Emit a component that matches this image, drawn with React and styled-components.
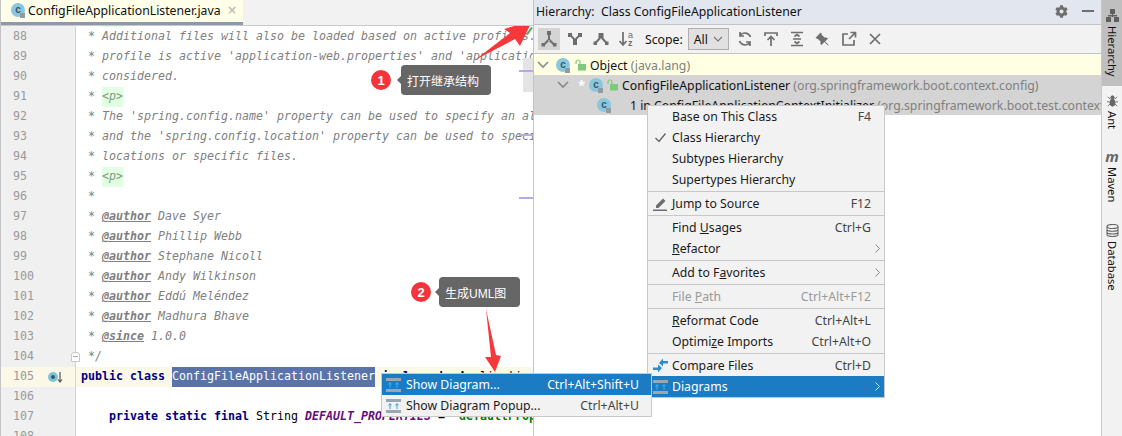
import React from "react";
import styled, { createGlobalStyle } from "styled-components";
import { FaCog } from "react-icons/fa";
import { BsPinAngleFill } from "react-icons/bs";

const UI_FONT = `"Noto Sans", "Noto Sans CJK SC", sans-serif`;
const MONO_FONT = `"DejaVu Sans Mono", "Liberation Mono", monospace`;

const GlobalStyle = createGlobalStyle`
  html, body {
    margin: 0;
    padding: 0;
    background: #fff;
  }
  svg {
    flex-shrink: 0;
  }
`;

function ClassIcon({ locked = true }) {
  return (
    <svg width="17" height="17" viewBox="0 0 17 17">
      <circle cx="8" cy="8" r="7" fill="#8ac6de" />
      <text x="8" y="11" fontSize="10" fontWeight="700" textAnchor="middle" fill="#35596b" fontFamily="Liberation Sans">
        c
      </text>
      {locked && <rect x="10" y="11" width="5" height="5" fill="#8f9aa3" />}
    </svg>
  );
}

function UnlockIcon() {
  return (
    <svg width="11" height="12" viewBox="0 0 11 12">
      <rect x="3" y="5" width="8" height="6.5" fill="#7fc97f" />
      <path d="M1 5V3a2 2 0 0 1 4 0v2" fill="none" stroke="#7fc97f" strokeWidth="1.2" />
    </svg>
  );
}

function Chevron() {
  return (
    <svg width="12" height="8" viewBox="0 0 12 8">
      <path d="M1 1l5 5 5-5" fill="none" stroke="#8c8c8c" strokeWidth="1.7" />
    </svg>
  );
}

function DiagramIcon({ onBlue }) {
  const arrow = onBlue ? "#3fb3e8" : "#3c9fd8";
  return (
    <svg width="15" height="14" viewBox="0 0 15 14">
      <rect x="0" y="0" width="15" height="3" fill="#9aa7b0" />
      <rect x="0" y="11" width="15" height="3" fill="#9aa7b0" />
      <path d="M4 10V5M2.5 6.5L4 4.5l1.5 2M11 10V5M9.5 6.5L11 4.5l1.5 2" fill="none" stroke={arrow} strokeWidth="1" />
    </svg>
  );
}

function ToolIcon({ d, fill = "none", children }) {
  return (
    <svg width="16" height="16" viewBox="0 0 16 16" fill={fill} stroke={fill === "none" ? "#6e6e6e" : "none"} strokeWidth="1.7">
      {d && <path d={d} />}
      {children}
    </svg>
  );
}

const MENU = [
  [{ label: "Base on This Class", shortcut: "F4" }, { label: "Class Hierarchy", check: true }, { label: "Subtypes Hierarchy" }, { label: "Supertypes Hierarchy" }],
  [{ label: "Jump to Source", shortcut: "F12", pencil: true }],
  [{ label: <>Find <u>U</u>sages</>, shortcut: "Ctrl+G" }, { label: <><u>R</u>efactor</>, more: true }],
  [{ label: <>Add to F<u>a</u>vorites</>, more: true }],
  [{ label: <>File <u>P</u>ath</>, shortcut: "Ctrl+Alt+F12", disabled: true }],
  [{ label: <><u>R</u>eformat Code</>, shortcut: "Ctrl+Alt+L" }, { label: <>Optimi<u>z</u>e Imports</>, shortcut: "Ctrl+Alt+O" }],
  [{ label: "Compare Files", shortcut: "Ctrl+D", compare: true }, { label: "Diagrams", more: true, active: true, diagram: true }],
];

export default function App() {
  const codeLines = [
    [88, <Doc> * Additional files will also be loaded based on active profiles. For example</Doc>],
    [89, <Doc> * profile is active 'application-web.properties' and 'application-web.yml' will</Doc>],
    [90, <Doc> * considered.</Doc>],
    [91, <><Doc> * </Doc><HtmlTag>&lt;p&gt;</HtmlTag></>],
    [92, <Doc> * The 'spring.config.name' property can be used to specify an alternative name</Doc>],
    [93, <Doc> * and the 'spring.config.location' property can be used to specify alternative</Doc>],
    [94, <Doc> * locations or specific files.</Doc>],
    [95, <><Doc> * </Doc><HtmlTag>&lt;p&gt;</HtmlTag></>],
    [96, <Doc> *</Doc>],
    [97, <><Doc> * </Doc><DocTag>@author</DocTag><Doc> Dave Syer</Doc></>],
    [98, <><Doc> * </Doc><DocTag>@author</DocTag><Doc> Phillip Webb</Doc></>],
    [99, <><Doc> * </Doc><DocTag>@author</DocTag><Doc> Stephane Nicoll</Doc></>],
    [100, <><Doc> * </Doc><DocTag>@author</DocTag><Doc> Andy Wilkinson</Doc></>],
    [101, <><Doc> * </Doc><DocTag>@author</DocTag><Doc> Eddú Meléndez</Doc></>],
    [102, <><Doc> * </Doc><DocTag>@author</DocTag><Doc> Madhura Bhave</Doc></>],
    [103, <><Doc> * </Doc><DocTag>@since</DocTag><Doc> 1.0.0</Doc></>],
    [104, <Doc> */</Doc>],
    [105, <><Keyword>public class </Keyword><Selected>ConfigFileApplicationListener</Selected><Keyword> implements </Keyword>ApplicationListener</>],
    [106, ""],
    [107, <>{"    "}<Keyword>private static final </Keyword>String <Constant>DEFAULT_PROPERTIES</Constant> = <Str>"defaultProperties"</Str>;</>],
    [108, ""],
  ];

  return (
    <Page>
      <GlobalStyle />
      <Editor>
        <TabBar>
          <Tab>
            <ClassIcon />
            <TabName>ConfigFileApplicationListener.java</TabName>
            <TabClose>×</TabClose>
          </Tab>
        </TabBar>
        <CodeArea>
          {codeLines.map(([no, code]) => (
            <CodeRow key={no} $current={no === 105}>
              <LineNo $current={no === 105}>
                <LineDigits>{no}</LineDigits>
                {no === 105 && (
                  <svg width="16" height="16" viewBox="0 0 16 16">
                    <circle cx="6" cy="8" r="5" fill="#7cc4da" />
                    <circle cx="6" cy="8" r="2" fill="#35596b" />
                    <path d="M13 3v10M11 10.5l2 2.5 2-2.5" fill="none" stroke="#555" strokeWidth="1.2" />
                  </svg>
                )}
              </LineNo>
              <CodeText>{code}</CodeText>
              {no === 104 && <FoldMark />}
            </CodeRow>
          ))}
        </CodeArea>
        <GreenTick />
        <ChangeBlock />
        <PurpleMark $top={70} />
        <PurpleMark $top={134} />
        <PurpleMark $top={197} />
      </Editor>

      <Hierarchy>
        <Header>
          <HeaderTitle>Hierarchy:&nbsp; Class ConfigFileApplicationListener</HeaderTitle>
          <HeaderTools>
            <FaCog size={13} color="#6e6e6e" />
            <MinusBar />
          </HeaderTools>
        </Header>
        <Toolbar>
          <ToolButton $active>
            <ToolIcon fill="#6e6e6e">
              <rect x="6" y="0" width="4" height="4" />
              <rect x="7" y="4" width="2" height="5" />
              <path d="M7 8L2 13l1.5 1.5L9 9zM9 8l5 5-1.5 1.5L7 9z" />
              <rect x="0.5" y="12" width="3.5" height="3.5" />
              <rect x="12" y="12" width="3.5" height="3.5" />
            </ToolIcon>
          </ToolButton>
          <ToolButton>
            <ToolIcon fill="#6e6e6e">
              <rect x="1" y="2" width="4" height="4" />
              <rect x="11" y="2" width="4" height="4" />
              <path d="M4 3.5L9 8.5 7.5 10 2.8 5zM12 3.5L7 8.5 8.5 10l4.7-5z" />
              <rect x="6" y="8" width="4" height="6" />
            </ToolIcon>
          </ToolButton>
          <ToolButton>
            <ToolIcon fill="#6e6e6e">
              <rect x="5.5" y="2" width="5" height="5" />
              <path d="M6.5 6L1.5 11.5 3 13l5-5.5zM9.5 6l5 5.5L13 13 8 7.5z" />
              <rect x="0.5" y="10.5" width="3.5" height="3.5" />
              <rect x="12" y="10.5" width="3.5" height="3.5" />
            </ToolIcon>
          </ToolButton>
          <ToolButton>
            <svg width="18" height="18" viewBox="0 0 18 18">
              <path d="M5 2v13M1.5 11L5 15l3.5-4" fill="none" stroke="#6e6e6e" strokeWidth="1.7" />
              <text x="10" y="8" fontSize="9" fill="#6e6e6e" fontFamily="Liberation Sans">a</text>
              <text x="10" y="16" fontSize="9" fontWeight="700" fill="#6e6e6e" fontFamily="Liberation Sans">z</text>
            </svg>
          </ToolButton>
          <ScopeLabel>Scope:</ScopeLabel>
          <ScopeBox>
            <span>All</span>
            <svg width="10" height="6" viewBox="0 0 10 6">
              <path d="M1 1l4 4 4-4" fill="none" stroke="#777" strokeWidth="1.1" />
            </svg>
          </ScopeBox>
          <ToolGroup>
            <ToolButton>
              <ToolIcon d="M13.5 6A6 6 0 0 0 3 4.5M2.5 10a6 6 0 0 0 10.5 1.5M3 1v4h4M13 15v-4H9" />
            </ToolButton>
            <ToolButton>
              <ToolIcon d="M2 5V2h12v3M8 15V5.500M4.500 9L8 5.500l3.500 3.500" />
            </ToolButton>
            <ToolButton>
              <ToolIcon d="M2 1.500h12M2 14.500h12M4 8h8M5.500 5.500L8 3.500l2.500 2M5.500 10.500L8 12.500l2.500-2" />
            </ToolButton>
            <ToolButton>
              <BsPinAngleFill size={15} color="#6e6e6e" style={{ transform: "scaleX(-1)" }} />
            </ToolButton>
            <ToolButton>
              <ToolIcon d="M7 3H2v11h11V9M8 8l6-6M9.500 1.500H14.500V6.500" />
            </ToolButton>
            <ToolButton>
              <ToolIcon d="M3 3l10 10M13 3L3 13" />
            </ToolButton>
          </ToolGroup>
        </Toolbar>
        <Tree>
          <TreeRow $tone="#ffffe4" $indent={3}>
            <Chevron />
            <IconSlot $left={6}><ClassIcon /></IconSlot>
            <IconSlot $left={3}><UnlockIcon /></IconSlot>
            <NodeName $left={4}>Object <Package>(java.lang)</Package></NodeName>
          </TreeRow>
          <TreeRow $tone="#d4d4d4" $indent={23}>
            <Chevron />
            <Star>*</Star>
            <IconSlot $left={3}><ClassIcon /></IconSlot>
            <IconSlot $left={2}><UnlockIcon /></IconSlot>
            <NodeName $left={4}>ConfigFileApplicationListener <Package>(org.springframework.boot.context.config)</Package></NodeName>
          </TreeRow>
          <TreeRow $tone="#d4d4d4" $indent={62}>
            <ClassIcon />
            <NodeName $left={17}>1 in ConfigFileApplicationContextInitializer <Package>(org.springframework.boot.test.context.SpringBoot</Package></NodeName>
          </TreeRow>
        </Tree>
      </Hierarchy>

      <Stripe>
        <StripeButton $active $height={86}>
          <svg width="13" height="13" viewBox="0 0 13 13" fill="#5f5f5f">
            <rect x="4" y="0" width="5" height="5" />
            <rect x="6" y="4" width="1" height="4" />
            <rect x="2" y="6" width="9" height="1.5" />
            <rect x="0" y="8" width="5" height="5" />
            <rect x="8" y="8" width="5" height="5" />
          </svg>
          <StripeLabel>Hierarchy</StripeLabel>
        </StripeButton>
        <StripeButton $height={54}>
          <svg width="13" height="12" viewBox="0 0 13 14" fill="none" stroke="#666" strokeWidth="1">
            <ellipse cx="6.5" cy="3" rx="2" ry="2" fill="#666" />
            <ellipse cx="6.5" cy="9" rx="3" ry="4" fill="#666" />
            <path d="M1 2l3 3M12 2L9 5M0 8h3M13 8h-3M1 13l3-3M12 13L9 10" />
          </svg>
          <StripeLabel>Ant</StripeLabel>
        </StripeButton>
        <StripeButton $height={75}>
          <MavenMark>m</MavenMark>
          <StripeLabel>Maven</StripeLabel>
        </StripeButton>
        <StripeButton $height={72}>
          <svg width="13" height="13" viewBox="0 0 13 13" fill="none" stroke="#666" strokeWidth="1.1">
            <ellipse cx="6.5" cy="2.5" rx="5.5" ry="2" />
            <path d="M1 2.5v8c0 1 2.5 2 5.5 2s5.5-1 5.5-2v-8M1 5.2c0 1 2.5 2 5.5 2s5.5-1 5.5-2M1 8c0 1 2.5 2 5.5 2s5.5-1 5.5-2" />
          </svg>
          <StripeLabel>Database</StripeLabel>
        </StripeButton>
      </Stripe>

      <ContextMenu>
        {MENU.map((group, i) => (
          <React.Fragment key={i}>
            {i > 0 && <MenuSeparator />}
            {group.map((item, j) => (
              <MenuRow key={j} $active={item.active} $disabled={item.disabled}>
                <MenuIcon>
                  {item.check && (
                    <svg width="13" height="11" viewBox="0 0 13 11">
                      <path d="M1.5 6L5 9.5 11.5 1.5" fill="none" stroke="#666" strokeWidth="1.4" />
                    </svg>
                  )}
                  {item.pencil && (
                    <svg width="15" height="14" viewBox="0 0 15 14">
                      <path d="M3 8.5L10 1.5l2.5 2.5-7 7H3zM0 12.5h14V14H0z" fill="#6e6e6e" />
                    </svg>
                  )}
                  {item.compare && (
                    <svg width="15" height="15" viewBox="0 0 15 15">
                      <path d="M6 5l4-4.500V3h5v2.500h-5V8.500zM9 10L5 14.500V12H0V9.500h5V6.500z" fill="#2f8ccc" />
                    </svg>
                  )}
                  {item.diagram && <DiagramIcon onBlue />}
                </MenuIcon>
                <MenuLabel>{item.label}</MenuLabel>
                {item.shortcut && <MenuShortcut $active={item.active} $disabled={item.disabled}>{item.shortcut}</MenuShortcut>}
                <MenuArrow>
                  {item.more && (
                    <svg width="5" height="9" viewBox="0 0 5 9">
                      <path d="M0.5 0.5l4 4-4 4" fill="none" stroke={item.active ? "#cfe4f5" : "#888"} strokeWidth="1" />
                    </svg>
                  )}
                </MenuArrow>
              </MenuRow>
            ))}
          </React.Fragment>
        ))}
      </ContextMenu>

      <Submenu>
        <SubmenuRow $active>
          <DiagramIcon onBlue />
          <MenuLabel>Show Diagram...</MenuLabel>
          <MenuShortcut $active>Ctrl+Alt+Shift+U</MenuShortcut>
        </SubmenuRow>
        <SubmenuRow>
          <DiagramIcon />
          <MenuLabel>Show Diagram Popup...</MenuLabel>
          <MenuShortcut>Ctrl+Alt+U</MenuShortcut>
        </SubmenuRow>
      </Submenu>

      <Callout $x={371} $y={65} $gap={10}>
        <Badge>1</Badge>
        <CalloutLabel $width={90}>打开继承结构</CalloutLabel>
      </Callout>
      <Callout $x={411} $y={277} $gap={8}>
        <Badge>2</Badge>
        <CalloutLabel $width={81}>生成UML图</CalloutLabel>
      </Callout>

      <ArrowOverlay width="1122" height="436" viewBox="0 0 1122 436">
        <polygon points="475,60 510,33 504,29 532,21 520,46 515,39" fill="#f5393b" />
        <polygon points="486,309 491,357 485,357 495,372 501,356 496,355" fill="#f5393b" />
      </ArrowOverlay>
    </Page>
  );
}

const Page = styled.div`
  position: relative;
  display: flex;
  width: 1122px;
  height: 436px;
  overflow: hidden;
  background: #fff;
  font-family: ${UI_FONT};
  font-size: 12.25px;
  color: #1a1a1a;
`;

const Editor = styled.div`
  position: relative;
  flex: 0 0 533px;
  display: flex;
  flex-direction: column;
  box-sizing: border-box;
  border-left: 1px solid #c4c4c4;
  overflow: hidden;
`;

const TabBar = styled.div`
  position: relative;
  z-index: 1;
  flex: 0 0 25px;
  box-sizing: border-box;
  background: #f2f2f2;
  border-bottom: 1px solid #c9c9c9;
`;

const Tab = styled.div`
  display: flex;
  align-items: center;
  box-sizing: border-box;
  width: 242px;
  height: 25px;
  padding: 0 0 2px 9px;
  gap: 1px;
  background: #fffee8;
  border-bottom: 3px solid #8c99ad;
`;

const TabName = styled.span`
  font-size: 12.25px;
  color: #111;
`;

const TabClose = styled.span`
  margin-left: 6px;
  font-size: 16px;
  line-height: 1;
  color: #b5b5b5;
`;

const CodeArea = styled.div`
  position: relative;
  flex: 1;
  padding-top: 1px;
  font-family: ${MONO_FONT};
  font-size: 11.63px;
  color: #000;

  &::before {
    content: "";
    position: absolute;
    left: 0;
    top: 0;
    width: 75px;
    height: 1px;
    background: #f0f0f0;
  }

  &::after {
    content: "";
    position: absolute;
    left: 101px;
    top: 0;
    width: 21px;
    height: 1px;
    background: #e3ffe3;
  }
`;

const CodeRow = styled.div`
  position: relative;
  display: flex;
  align-items: flex-start;
  height: 20px;
  white-space: pre;
  overflow: hidden;
  background: ${(p) => (p.$current ? "#fcf8e8" : "#fff")};
`;

const LineNo = styled.div`
  flex: 0 0 75px;
  display: flex;
  align-items: center;
  box-sizing: border-box;
  height: 20px;
  padding-left: 12px;
  background: ${(p) => (p.$current ? "#fcf8e8" : "#f0f0f0")};
  border-right: 1px solid #d4d4d4;
  color: #9a9a9a;
`;

const LineDigits = styled.span`
  width: 34px;
  line-height: 18px;
  align-self: flex-start;
`;

const CodeText = styled.div`
  padding-left: 5px;
  line-height: 18px;
`;

const Doc = styled.span`
  color: #808080;
  font-style: italic;
`;

const HtmlTag = styled.span`
  display: inline-block;
  vertical-align: top;
  height: 20px;
  color: #7a9a7a;
  font-style: italic;
  background: #e3ffe3;
`;

const DocTag = styled.span`
  color: #808080;
  font-style: italic;
  font-weight: 700;
  text-decoration: underline;
`;

const Keyword = styled.span`
  color: #000080;
  font-weight: 700;
`;

const Selected = styled.span`
  display: inline-block;
  vertical-align: top;
  height: 20px;
  background: #5a74aa;
  color: #fff;
`;

const Constant = styled.span`
  color: #660e7a;
  font-style: italic;
  font-weight: 700;
`;

const Str = styled.span`
  color: #008000;
  font-weight: 700;
`;

const FoldMark = styled.span`
  position: absolute;
  left: 70px;
  top: 5px;
  box-sizing: border-box;
  width: 9px;
  height: 10px;
  background: #fff;
  border: 1px solid #c8c8c8;
  border-radius: 3px 3px 0 0;

  &::after {
    content: "";
    position: absolute;
    left: 1px;
    top: 3px;
    width: 5px;
    height: 1px;
    background: #aaa;
  }
`;

const GreenTick = styled.span`
  position: absolute;
  left: 524px;
  top: 30px;
  width: 9px;
  height: 2px;
  background: #59a869;
  transform: rotate(-55deg);
`;

const ChangeBlock = styled.span`
  position: absolute;
  right: 0;
  top: 58px;
  width: 10px;
  height: 34px;
  background: #e4e4e4;
`;

const PurpleMark = styled.span`
  position: absolute;
  right: 0;
  top: ${(p) => p.$top}px;
  width: 14px;
  height: 2px;
  background: #b8a8e8;
`;

const Hierarchy = styled.div`
  flex: 0 0 568px;
  display: flex;
  flex-direction: column;
  box-sizing: border-box;
  border-left: 1px solid #c4c4c4;
  overflow: hidden;
`;

const Header = styled.div`
  flex: 0 0 25px;
  display: flex;
  align-items: center;
  justify-content: space-between;
  box-sizing: border-box;
  padding: 0 7px 2px 2px;
  background: #e2e6ee;
  border-bottom: 1px solid #c4c4c4;
`;

const HeaderTitle = styled.span`
  color: #111;
`;

const HeaderTools = styled.div`
  display: flex;
  align-items: center;
  gap: 14px;
`;

const MinusBar = styled.span`
  width: 12px;
  height: 2px;
  background: #6e6e6e;
`;

const Toolbar = styled.div`
  flex: 0 0 29px;
  display: flex;
  align-items: center;
  box-sizing: border-box;
  padding-left: 4px;
  gap: 4px;
  background: #f2f2f2;
  border-bottom: 1px solid #c4c4c4;
`;

const ToolButton = styled.div`
  flex: 0 0 22px;
  display: flex;
  align-items: center;
  justify-content: center;
  height: 22px;
  background: ${(p) => (p.$active ? "#d4d4d4" : "transparent")};
`;

const ToolGroup = styled.div`
  display: flex;
  align-items: center;
  gap: 4px;
  margin-left: 1px;
`;

const ScopeLabel = styled.span`
  margin-left: 3px;
  color: #111;
`;

const ScopeBox = styled.div`
  display: flex;
  align-items: center;
  justify-content: space-between;
  box-sizing: border-box;
  width: 41px;
  height: 22px;
  margin-left: 1px;
  padding: 0 5px;
  background: #e1e1e1;
  border: 1px solid #aeaeae;
  color: #111;
`;

const Tree = styled.div`
  display: flex;
  flex-direction: column;
  padding-top: 1px;
  background: #ffffe4;
`;

const TreeRow = styled.div`
  display: flex;
  align-items: center;
  height: 20px;
  padding-left: ${(p) => p.$indent}px;
  background: ${(p) => p.$tone};
  white-space: nowrap;
  overflow: hidden;
`;

const IconSlot = styled.span`
  display: flex;
  margin-left: ${(p) => p.$left}px;
`;

const Star = styled.span`
  margin-left: 9px;
  color: #fff;
  font-weight: 700;
  font-size: 13px;
`;

const NodeName = styled.span`
  margin-left: ${(p) => p.$left}px;
  color: #111;
`;

const Package = styled.span`
  color: #808080;
`;

const Stripe = styled.div`
  flex: 0 0 21px;
  display: flex;
  flex-direction: column;
  box-sizing: border-box;
  border-left: 1px solid #c8c8c8;
  background: #f2f2f2;
`;

const StripeButton = styled.div`
  flex: 0 0 ${(p) => p.$height}px;
  display: flex;
  flex-direction: column;
  align-items: center;
  box-sizing: border-box;
  padding-top: 9px;
  gap: 4px;
  background: ${(p) => (p.$active ? "#bfbfbf" : "transparent")};
`;

const StripeLabel = styled.span`
  writing-mode: vertical-rl;
  font-size: 11.2px;
  color: #111;
`;

const MavenMark = styled.span`
  font-size: 15px;
  line-height: 14px;
  font-weight: 700;
  font-style: italic;
  color: #666;
`;

const ContextMenu = styled.div`
  position: absolute;
  left: 647px;
  top: 105px;
  box-sizing: border-box;
  width: 238px;
  background: #f2f2f2;
  border: 1px solid #c8c8c8;
`;

const MenuSeparator = styled.div`
  height: 1px;
  margin: 1px 0;
  background: #c8c8c8;
`;

const MenuRow = styled.div`
  display: flex;
  align-items: center;
  height: 21px;
  background: ${(p) => (p.$active ? "#1b7bc3" : "transparent")};
  color: ${(p) => (p.$active ? "#fff" : p.$disabled ? "#999" : "#1a1a1a")};
`;

const MenuIcon = styled.span`
  flex: 0 0 24px;
  display: flex;
  align-items: center;
  justify-content: center;
`;

const MenuLabel = styled.span`
  flex: 1;
  white-space: nowrap;
`;

const MenuShortcut = styled.span`
  white-space: nowrap;
  color: ${(p) => (p.$active ? "#fff" : p.$disabled ? "#999" : "#444")};
`;

const MenuArrow = styled.span`
  flex: 0 0 13px;
  display: flex;
  justify-content: flex-end;
  padding-right: 4px;
  box-sizing: border-box;
`;

const Submenu = styled.div`
  position: absolute;
  left: 381px;
  top: 373px;
  box-sizing: border-box;
  width: 271px;
  background: #f2f2f2;
  border: 1px solid #c8c8c8;
`;

const SubmenuRow = styled.div`
  display: flex;
  align-items: center;
  gap: 5px;
  height: 21px;
  padding: 0 12px 0 4px;
  background: ${(p) => (p.$active ? "#1b7bc3" : "transparent")};
  color: ${(p) => (p.$active ? "#fff" : "#1a1a1a")};
`;

const Callout = styled.div`
  position: absolute;
  left: ${(p) => p.$x}px;
  top: ${(p) => p.$y}px;
  display: flex;
  align-items: center;
  gap: ${(p) => p.$gap}px;
  height: 30px;
`;

const Badge = styled.span`
  display: flex;
  align-items: center;
  justify-content: center;
  width: 20px;
  height: 20px;
  border-radius: 50%;
  background: #f4333c;
  color: #fff;
  font-family: "Liberation Sans", sans-serif;
  font-size: 13px;
  font-weight: 700;
`;

const CalloutLabel = styled.span`
  position: relative;
  display: flex;
  align-items: center;
  box-sizing: border-box;
  width: ${(p) => p.$width}px;
  height: 30px;
  padding-left: 6px;
  border-radius: 4px;
  background: #666;
  color: #fff;
  font-family: "Liberation Sans", "Noto Sans CJK SC", sans-serif;
  font-size: 12px;
  white-space: nowrap;

  &::before {
    content: "";
    position: absolute;
    left: -4px;
    top: 11px;
    border-top: 4px solid transparent;
    border-bottom: 4px solid transparent;
    border-right: 4px solid #666;
  }
`;

const ArrowOverlay = styled.svg`
  position: absolute;
  left: 0;
  top: 0;
  pointer-events: none;
`;
